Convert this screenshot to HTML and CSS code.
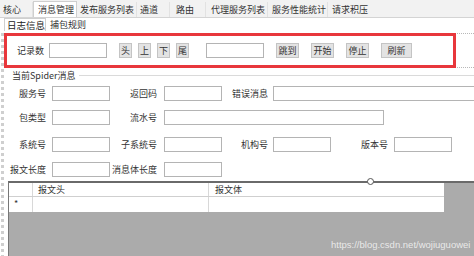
FILE: index.html
```html
<!DOCTYPE html>
<html lang="zh-CN">
<head>
  <meta charset="UTF-8">
  <title>Spider</title>
  <link rel="stylesheet" href="styles.css">
</head>
<body>
  <nav class="tabs">
    <span class="tab">核心</span>
    <span class="tab active">消息管理</span>
    <span class="tab">发布服务列表</span>
    <span class="tab">通道</span>
    <span class="tab">路由</span>
    <span class="tab">代理服务列表</span>
    <span class="tab">服务性能统计</span>
    <span class="tab">请求积压</span>
  </nav>
  <nav class="subtabs">
    <span class="subtab active">日志信息</span>
    <span class="subtab">捕包规则</span>
  </nav>
  <main class="panel">
    <div class="toolbar-line">
      <div class="toolbar">
        <span class="lbl">记录数</span>
        <input class="box">
        <div class="nav-btns">
          <button>头</button>
          <button>上</button>
          <button>下</button>
          <button>尾</button>
        </div>
        <input class="box jump">
        <div class="act-btns">
          <button>跳到</button>
          <button>开始</button>
          <button>停止</button>
          <button class="wide">刷新</button>
        </div>
      </div>
    </div>

    <div class="group-title"><span>当前Spider消息</span></div>

    <div class="row r1">
      <span class="lbl c1">服务号</span><input class="box">
      <span class="lbl c2">返回码</span><input class="box">
      <span class="lbl c3">错误消息</span><input class="box long">
    </div>
    <div class="row r2">
      <span class="lbl c1">包类型</span><input class="box">
      <span class="lbl c2">流水号</span><input class="box long">
    </div>
    <div class="row r3">
      <span class="lbl c1">系统号</span><input class="box">
      <span class="lbl c2">子系统号</span><input class="box">
      <span class="lbl c3">机构号</span><input class="box">
      <span class="lbl c4">版本号</span><input class="box">
    </div>
    <div class="row r4">
      <span class="lbl c1">报文长度</span><input class="box">
      <span class="lbl c2">消息体长度</span><input class="box">
    </div>

    <div class="grid">
      <span class="splitter"></span>
      <div class="grid-table">
        <div class="grid-row head">
          <span class="cell rh"></span>
          <span class="cell col1">报文头</span>
          <span class="cell col2">报文体</span>
        </div>
        <div class="grid-row">
          <span class="cell rh">*</span>
          <span class="cell col1"></span>
          <span class="cell col2"></span>
        </div>
      </div>
    </div>
  </main>
  <div class="watermark">https://blog.csdn.net/wojiuguowei</div>
</body>
</html>
```

FILE: styles.css
```css
body {
  margin: 0;
  width: 474px;
  height: 256px;
  overflow: hidden;
  position: relative;
  background: #fff;
  font-family: "Noto Sans CJK SC", "Liberation Sans", sans-serif;
  font-size: 9px;
  color: #333;
}
.tabs {
  display: flex;
  height: 17px;
  padding-left: 1px;
  background: #f2f2f2;
  border-bottom: 1px solid #d4d4d4;
}
.tab {
  flex: none;
  box-sizing: border-box;
  white-space: nowrap;
  display: flex;
  align-items: center;
  margin-top: 2px;
  line-height: 15px;
  border-right: 1px solid #e2e2e2;
}
.tab:nth-child(1) { width: 32px; padding-left: 2px; }
.tab:nth-child(2) { width: 44px; padding-left: 4px; }
.tab:nth-child(3) { width: 60px; padding-left: 3px; }
.tab:nth-child(4) { width: 33px; padding-left: 3px; }
.tab:nth-child(5) { width: 36px; padding-left: 6px; }
.tab:nth-child(6) { width: 62px; padding-left: 5px; }
.tab:nth-child(7) { width: 60px; padding-left: 4px; }
.tab:nth-child(8) { width: 42px; padding-left: 4px; border-right: 0; }
.tab.active {
  background: #fff;
  border: 1px solid #cfcfcf;
  border-bottom: 0;
  margin-top: 1px;
}
.subtabs {
  display: flex;
  height: 13px;
  padding-left: 4px;
}
.subtab {
  flex: none;
  box-sizing: border-box;
  white-space: nowrap;
  display: flex;
  align-items: center;
  padding-left: 4px;
  line-height: 12px;
}
.subtab.active {
  width: 42px;
  padding-left: 2px;
  border: 1px solid #cfcfcf;
  border-bottom: 0;
  font-size: 9.5px;
  color: #222;
}
.panel {
  margin-left: 1px;
  border-left: 3px dotted #cfcfcf;
  height: 225px;
}
.toolbar-line {
  margin-top: 2px;
  height: 35px;
  box-sizing: border-box;
  border-top: 1px dotted #b8b8b8;
  border-bottom: 1px dotted #b8b8b8;
}
.toolbar {
  display: flex;
  align-items: center;
  width: 452px;
  height: 35px;
  margin-top: -1px;
  box-sizing: border-box;
  border: 3px solid #e8373c;
  padding-left: 10px;
  background: #fff;
}
.lbl {
  flex: none;
  white-space: nowrap;
  line-height: 15px;
}
.box {
  flex: none;
  width: 58px;
  height: 15px;
  box-sizing: border-box;
  margin: 0;
  padding: 0;
  border: 1px solid #b4b4b4;
  background: #fff;
}
.toolbar .box { margin-left: 5px; }
.toolbar .box.jump { margin-left: 17px; }
button {
  height: 15px;
  padding: 0;
  margin: 0;
  font: inherit;
  color: #333;
  background: #e3e3e3;
  border: 1px solid #c4c4c4;
  border-radius: 0;
}
.nav-btns {
  display: flex;
  gap: 6px;
  margin-left: 12px;
}
.nav-btns button { width: 13px; }
.act-btns {
  display: flex;
  gap: 12px;
  margin-left: 12px;
}
.act-btns button { width: 23px; }
.act-btns button.wide { width: 31px; }
.group-title {
  display: flex;
  align-items: center;
  height: 14px;
  padding-left: 8px;
}
.group-title::after {
  content: "";
  flex: 1;
  margin-left: 4px;
  border-top: 1px solid #dadada;
}
.row {
  display: flex;
  align-items: center;
  height: 15px;
}
.r1 { margin-top: 4px; }
.r2 { margin-top: 9px; }
.r3 { margin-top: 12px; }
.r4 { margin-top: 10px; }
.c1, .c2, .c3, .c4 { text-align: right; }
.c1 { width: 42px; margin-right: 6px; }
.c2 { width: 47px; margin-right: 7px; }
.c3 { width: 46px; margin-right: 5px; }
.c4 { width: 57px; margin-right: 6px; }
.box.long { width: 220px; }
.grid {
  position: relative;
  margin-top: 4px;
  margin-left: 4px;
  height: 80px;
  border-top: 2px solid #6a6a6a;
  border-left: 1px solid #777;
  background: #ababab;
}
.splitter {
  position: absolute;
  left: 358px;
  top: -5px;
  width: 5px;
  height: 5px;
  border: 1px solid #555;
  border-radius: 50%;
  background: #fff;
}
.grid-table {
  width: 435px;
  background: #fff;
}
.grid-row {
  display: flex;
  height: 15px;
  border-bottom: 1px solid #d8d8d8;
  box-sizing: border-box;
}
.grid-row.head { height: 14px; border-bottom-color: #cfcfcf; }
.grid-row:last-child { border-bottom: 0; }
.cell {
  line-height: 14px;
  border-right: 1px solid #d8d8d8;
  box-sizing: border-box;
}
.rh { width: 24px; padding-left: 5px; }
.col1 { width: 176px; padding-left: 5px; }
.col2 { flex: 1; padding-left: 6px; border-right: 0; }
.watermark {
  position: absolute;
  left: 331px;
  top: 239px;
  font-family: "Liberation Sans", sans-serif;
  font-size: 9.5px;
  color: rgba(255, 255, 255, 0.75);
}
```
